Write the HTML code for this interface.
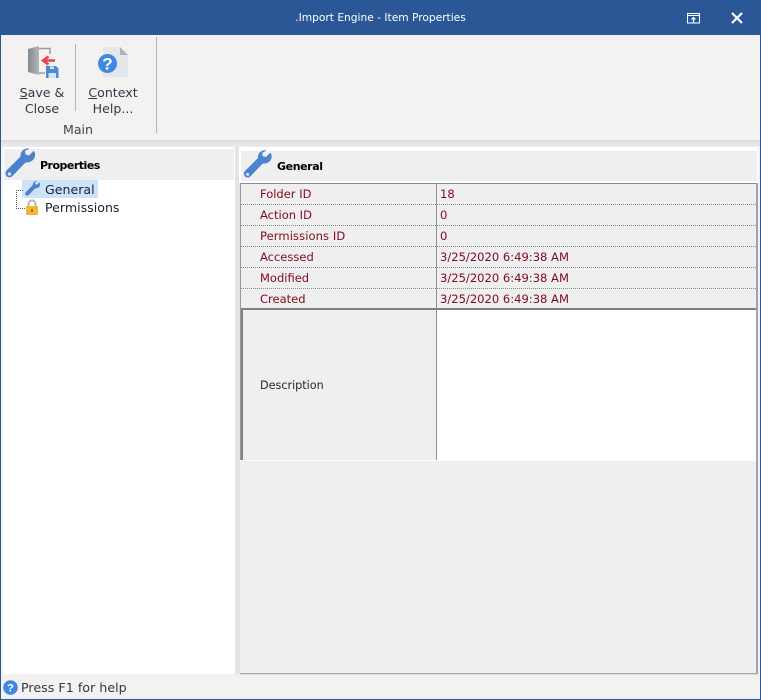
<!DOCTYPE html>
<html>
<head>
<meta charset="utf-8">
<style>
html,body{margin:0;padding:0;width:761px;height:700px;overflow:hidden;background:#f3f2f1;font-family:"DejaVu Sans","Liberation Sans",sans-serif;font-size:12px;}
.a{position:absolute;white-space:nowrap;}
.frame{position:absolute;left:0;top:0;width:761px;height:700px;overflow:hidden;}
u{text-decoration:underline;}
.lbl{position:absolute;left:260px;color:#800a1e;font-size:11.5px;line-height:14px;white-space:nowrap;}
.val{position:absolute;left:440px;color:#800a1e;font-size:11.55px;line-height:14px;white-space:nowrap;}
.dot{position:absolute;left:241px;width:515px;height:0;border-top:1px dotted #8a8a8a;}
.rib{position:absolute;color:#303a46;font-size:12.6px;line-height:16px;text-align:center;white-space:nowrap;}
</style>
</head>
<body>
<div class="frame">
<!-- title bar -->
<div class="a" style="left:0;top:0;width:761px;height:35px;background:#2b5797;"></div>
<div class="a" style="left:0;top:10px;width:761px;text-align:center;color:#fff;font-size:10.65px;line-height:15px;">.Import Engine - Item Properties</div>
<svg class="a" style="left:687px;top:13px" width="14" height="11" viewBox="0 0 14 11"><path d="M.5.500h12v9.500H.5zM.5 2.500h12" fill="none" stroke="#fff"/><path d="M6.500 10V5M4.500 6.500l2-2 2 2" fill="none" stroke="#fff" stroke-width="1.200"/></svg>
<svg class="a" style="left:731px;top:12px" width="12" height="12" viewBox="0 0 12 12"><path d="M1 1l10 10M11 1L1 11" stroke="#fff" stroke-width="2.200" fill="none"/></svg>
<!-- window borders -->
<div class="a" style="left:0;top:35px;width:1px;height:665px;background:#2b5797;"></div>
<div class="a" style="left:760px;top:35px;width:1px;height:665px;background:#2b5797;"></div>
<div class="a" style="left:0;top:699px;width:761px;height:1px;background:#2b5797;"></div>
<!-- ribbon -->
<div class="a" style="left:1px;top:35px;width:759px;height:105px;background:#f3f2f1;"></div>
<div class="a" style="left:1px;top:140px;width:759px;height:7px;background:linear-gradient(#dcdcdc,#ececec);"></div>
<div class="a" style="left:75px;top:44px;width:1px;height:67px;background:#b4b4b4;"></div>
<div class="a" style="left:156px;top:37px;width:1px;height:96px;background:#b4b4b4;"></div>
<!-- save icon -->
<svg class="a" style="left:26px;top:44px" width="34" height="36" viewBox="0 0 34 36">
<defs><linearGradient id="d" x1="0" x2="1" y1="0" y2="0"><stop offset="0" stop-color="#84898d"/><stop offset="1" stop-color="#b4b7ba"/></linearGradient></defs>
<path d="M2 5L13 2V31L2 28Z" fill="url(#d)"/>
<path d="M13 4.500H24V10M24 24V25M13 29H19" fill="none" stroke="#9a9da0" stroke-width="1.500"/>
<path d="M29 16.500H19" stroke="#e8414f" stroke-width="2.500"/><path d="M22.500 12.500L17 16.500L22.500 20.500" fill="none" stroke="#e8414f" stroke-width="2.500"/>
<path d="M20 22H30L32.500 24.500V34H20Z" fill="#4a8bd0"/><rect x="24" y="22.500" width="4" height="2.500" fill="#cfe2f5"/><rect x="22.500" y="29" width="7.500" height="5" fill="#d3e4f5"/>
</svg>
<!-- help icon -->
<svg class="a" style="left:97px;top:47px" width="32" height="32" viewBox="0 0 32 32">
<path d="M6 0H23L31 8V30H6Z" fill="#e4e7ec"/><path d="M23 0L31 8H23Z" fill="#aeb4bc"/>
<circle cx="10.500" cy="16.500" r="9.500" fill="#3f8ae0"/>
<text x="10.500" y="22.500" text-anchor="middle" font-family="Liberation Sans" font-weight="bold" font-size="17" fill="#fff">?</text>
</svg>
<div class="rib" style="left:2px;width:80px;top:85px;"><u>S</u>ave &amp;<br>Close</div>
<div class="rib" style="left:73px;width:80px;top:85px;"><u>C</u>ontext<br>Help...</div>
<div class="rib" style="left:38px;width:80px;top:122px;color:#3c4650;">Main</div>
<!-- body -->
<div class="a" style="left:1px;top:147px;width:759px;height:527px;background:#f3f2f1;"></div>
<div class="a" style="left:235px;top:147px;width:5px;height:527px;background:#e4e4e4;"></div>
<!-- left panel -->
<div class="a" style="left:3px;top:147px;width:232px;height:527px;background:#fff;"></div>
<div class="a" style="left:4px;top:149px;width:230px;height:31px;background:#efefef;"></div>
<svg class="a" style="left:4px;top:148px" width="32" height="32" viewBox="0 0 32 32"><path d="M31 5.500C30.500 3.500 30 3 29.500 3L25 7.500 21.500 6.500 21 3 25.500 0.500C21 -0.500 16 3 16.500 8.500L2.500 22.500C-0.500 26 3.500 31.500 8 28.500L21.500 14.500C27 15 32 11 31 5.500Z" fill="#4c83ce"/><circle cx="5.500" cy="26" r="1.600" fill="#dce8f6"/></svg>
<div class="a" style="left:40px;top:159px;font-size:11px;line-height:14px;font-weight:bold;color:#000;letter-spacing:-.5px;">Properties</div>
<!-- tree -->
<div class="a" style="left:22px;top:180px;width:76px;height:18px;background:#cce4f9;"></div>
<div class="a" style="left:16px;top:190px;width:7px;border-top:1px dotted #555;"></div>
<div class="a" style="left:16px;top:190px;height:19px;border-left:1px dotted #555;"></div>
<div class="a" style="left:16px;top:208px;width:9px;border-top:1px dotted #555;"></div>
<svg class="a" style="left:24px;top:181px" width="17" height="16" viewBox="0 0 32 32"><path d="M31 5.500C30.500 3.500 30 3 29.500 3L25 7.500 21.500 6.500 21 3 25.500 0.500C21 -0.500 16 3 16.500 8.500L2.500 22.500C-0.500 26 3.500 31.500 8 28.500L21.500 14.500C27 15 32 11 31 5.500Z" fill="#4c7fc4"/></svg>
<div class="a" style="left:45px;top:182px;font-size:12.6px;line-height:16px;color:#1c2430;">General</div>
<svg class="a" style="left:25px;top:199px" width="14" height="17" viewBox="0 0 14 17"><path d="M3.500 8V5a3.500 3.500 0 0 1 7 0v3" fill="none" stroke="#bdbdbd" stroke-width="2.200"/><rect x="1" y="7" width="12" height="9" rx="1" fill="#f2b632"/><rect x="6.300" y="10" width="1.500" height="3" fill="#7a5a10"/></svg>
<div class="a" style="left:45px;top:200px;font-size:12.6px;line-height:16px;color:#1c2430;">Permissions</div>
<!-- right panel -->
<div class="a" style="left:240px;top:147px;width:518px;height:527px;background:#efefef;"></div>
<div class="a" style="left:239px;top:147px;width:519px;height:36px;background:#fff;"></div>
<div class="a" style="left:241px;top:151px;width:516px;height:30px;background:#efefef;"></div>
<svg class="a" style="left:242px;top:150px" width="31" height="30" viewBox="0 0 32 32"><path d="M31 5.500C30.500 3.500 30 3 29.500 3L25 7.500 21.500 6.500 21 3 25.500 0.500C21 -0.500 16 3 16.500 8.500L2.500 22.500C-0.500 26 3.500 31.500 8 28.500L21.500 14.500C27 15 32 11 31 5.500Z" fill="#4c83ce"/><circle cx="5.500" cy="26" r="1.600" fill="#dce8f6"/></svg>
<div class="a" style="left:277px;top:160px;font-size:11px;line-height:14px;font-weight:bold;color:#000;letter-spacing:-.4px;">General</div>
<!-- table -->
<div class="a" style="left:240px;top:183px;width:516px;height:1px;background:#8c8c8c;"></div>
<div class="a" style="left:240px;top:183px;width:1px;height:277px;background:#9a9a9a;"></div>
<div class="a" style="left:436px;top:183px;width:1px;height:277px;background:#8f8f8f;"></div>
<div class="dot" style="top:204px"></div>
<div class="dot" style="top:225px"></div>
<div class="dot" style="top:246px"></div>
<div class="dot" style="top:267px"></div>
<div class="dot" style="top:288px"></div>
<div class="a" style="left:241px;top:308px;width:515px;height:2px;background:#808080;"></div>
<div class="a" style="left:241px;top:308px;width:2px;height:152px;background:#808080;"></div>
<div class="a" style="left:437px;top:310px;width:319px;height:150px;background:#fff;"></div>
<div class="a" style="left:240px;top:460px;width:516px;height:1px;background:#fff;"></div>
<div class="a" style="left:756px;top:183px;width:2px;height:491px;background:#a5a5a5;"></div>
<div class="a" style="left:240px;top:673px;width:518px;height:1px;background:#a5a5a5;"></div>
<div class="a" style="left:240px;top:674px;width:518px;height:1px;background:#e2e2e2;"></div>
<div class="lbl" style="top:187px">Folder ID</div><div class="val" style="top:187px">18</div>
<div class="lbl" style="top:208px">Action ID</div><div class="val" style="top:208px">0</div>
<div class="lbl" style="top:229px;letter-spacing:.1px">Permissions ID</div><div class="val" style="top:229px">0</div>
<div class="lbl" style="top:250px">Accessed</div><div class="val" style="top:250px">3/25/2020 6:49:38 AM</div>
<div class="lbl" style="top:271px">Modified</div><div class="val" style="top:271px">3/25/2020 6:49:38 AM</div>
<div class="lbl" style="top:292px">Created</div><div class="val" style="top:292px">3/25/2020 6:49:38 AM</div>
<div class="lbl" style="top:379px;color:#1c2430;font-size:11.2px;">Description</div>
<!-- status bar -->
<svg class="a" style="left:3px;top:680px" width="15" height="15" viewBox="0 0 15 15"><circle cx="7.500" cy="7.500" r="7.300" fill="#3f8ae0"/><text x="7.500" y="11.500" text-anchor="middle" font-family="Liberation Sans" font-weight="bold" font-size="11" fill="#fff">?</text></svg>
<div class="a" style="left:21px;top:680px;font-size:12.7px;line-height:16px;color:#303a46;">Press F1 for help</div>
</div>
</body>
</html>
